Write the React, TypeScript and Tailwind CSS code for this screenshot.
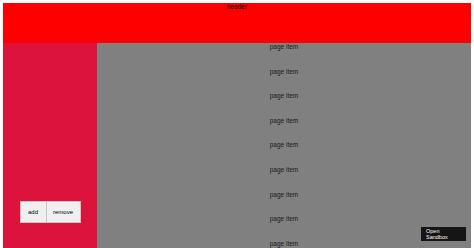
import React from "react";

export default function App() {
  const items = Array.from({ length: 9 });
  return (
    <div
      className="relative h-[248px] w-[474px] overflow-hidden bg-white pt-[3px] px-[3px]"
      style={{ fontFamily: '"Liberation Sans", Arial, sans-serif' }}
    >
      <div className="flex h-full flex-col">
        <div className="h-[40px] shrink-0 bg-[#ff0000] text-center text-[6.5px] leading-[8px] text-black">
          header
        </div>
        <div className="flex flex-1 overflow-hidden">
          <div className="flex w-[94px] shrink-0 flex-col items-center justify-end bg-[#dc143c] pb-[25px]">
            <div className="flex">
              <button className="h-[22px] w-[27px] border border-[#c8c8c8] bg-[#efefef] text-[6px] text-black">
                add
              </button>
              <button className="h-[22px] w-[34px] border border-l-0 border-[#c8c8c8] bg-[#efefef] text-[6px] text-black">
                remove
              </button>
            </div>
          </div>
          <div className="flex flex-1 flex-col bg-[#808080]">
            {items.map((_, i) => (
              <div
                key={i}
                className="h-[24.6px] shrink-0 text-center text-[6.5px] leading-[8px] text-[#1a1a1a]"
              >
                page item
              </div>
            ))}
          </div>
        </div>
      </div>
      <div className="absolute left-[421px] top-[227px] flex h-[14px] w-[45px] flex-col justify-center bg-[#151515] pl-[5px] text-[5.5px] leading-[6px] text-white">
        <span>Open</span>
        <span>Sandbox</span>
      </div>
    </div>
  );
}
